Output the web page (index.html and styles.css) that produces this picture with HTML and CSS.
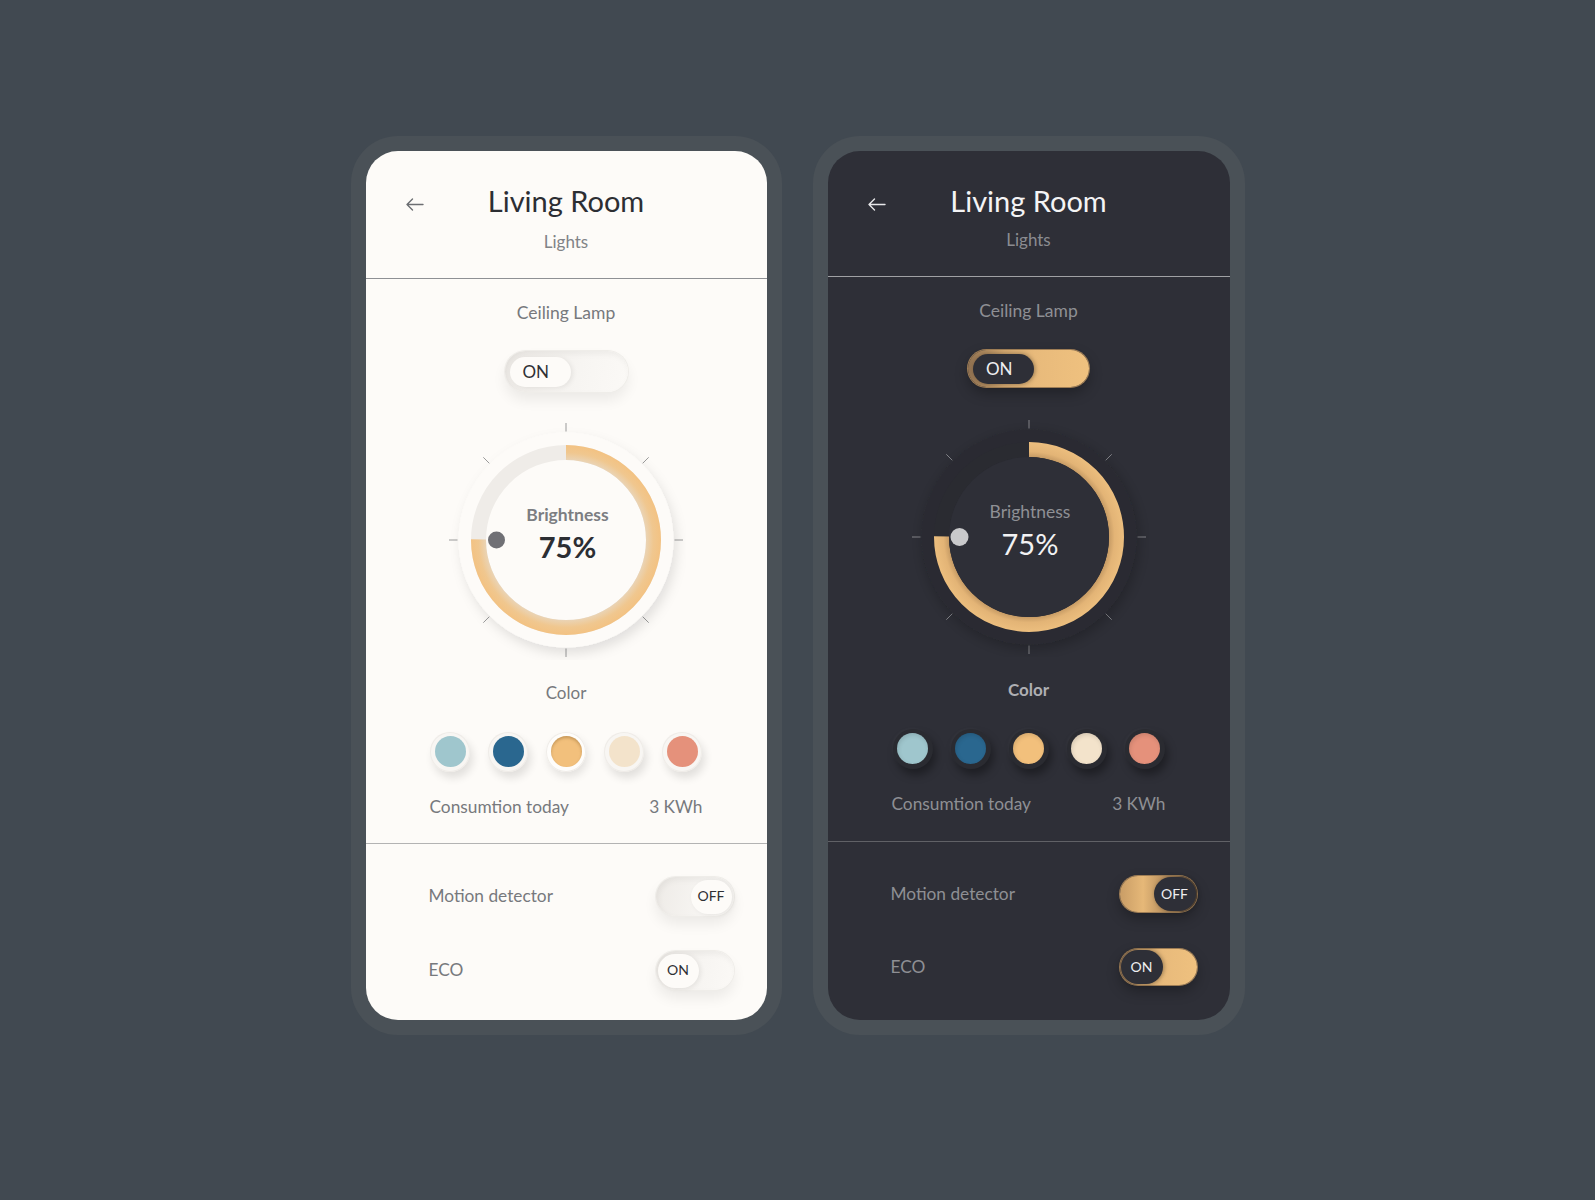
FILE: index.html
```html
<!DOCTYPE html>
<html>
<head>
  <meta charset="UTF-8">
  <title>Living Room Lights</title>
  <link rel="stylesheet" href="styles.css">
</head>
<body>
  <div class="screens">

    <!-- light theme -->
    <div class="device">
      <div class="card">
        <div class="card-header">
          <svg class="back" width="19" height="13" viewBox="0 0 19 13">
            <path d="M18 6.5H2 M7.5 1 L2 6.5 L7.5 12" />
          </svg>
          <div class="title-block">
            <h1>Living Room</h1>
            <p class="subtitle">Lights</p>
          </div>
        </div>

        <div class="lamp">
          <p class="label">Ceiling Lamp</p>
          <div class="toggle toggle-lg">
            <div class="toggle-knob">ON</div>
          </div>

          <div class="dial">
            <svg class="dial-svg" width="240" height="240" viewBox="0 0 240 240">
              <defs>
                <radialGradient id="ringLight" cx="120" cy="120" r="95" gradientUnits="userSpaceOnUse">
                  <stop offset="0.84" stop-color="#ead4b6"/>
                  <stop offset="0.92" stop-color="#f0c78f"/>
                  <stop offset="1" stop-color="#f3c282"/>
                </radialGradient>
                <filter id="faceLight" x="-20%" y="-20%" width="140%" height="140%">
                  <feDropShadow dx="3" dy="6" stdDeviation="6" flood-color="#000" flood-opacity="0.11"/>
                </filter>
              </defs>
              <g class="ticks">
                <line x1="120" y1="3" x2="120" y2="11.5"/>
                <line x1="120" y1="228.5" x2="120" y2="237"/>
                <line x1="3" y1="120" x2="11.5" y2="120"/>
                <line x1="228.5" y1="120" x2="237" y2="120"/>
                <line x1="37.3" y1="37.3" x2="43.3" y2="43.3"/>
                <line x1="202.7" y1="37.3" x2="196.7" y2="43.3"/>
                <line x1="37.3" y1="202.7" x2="43.3" y2="196.7"/>
                <line x1="202.7" y1="202.7" x2="196.7" y2="196.7"/>
              </g>
              <circle class="dial-face" cx="120" cy="120" r="107.5" filter="url(#faceLight)"/>
              <circle class="dial-track" cx="120" cy="120" r="87.5"/>
              <circle class="dial-arc" cx="120" cy="120" r="87.5" stroke="url(#ringLight)"
                      stroke-dasharray="412.3 549.8" transform="rotate(-90 120 120)"/>
              <circle class="dial-knob" cx="50.5" cy="120" r="8.5"/>
            </svg>
            <div class="dial-text">
              <span class="dial-caption">Brightness</span>
              <span class="dial-value">75%</span>
            </div>
          </div>

          <p class="label label-color">Color</p>
          <div class="swatches">
            <div class="swatch"><span class="swatch-sky"></span></div>
            <div class="swatch"><span class="swatch-navy"></span></div>
            <div class="swatch selected"><span class="swatch-amber"></span></div>
            <div class="swatch"><span class="swatch-cream"></span></div>
            <div class="swatch"><span class="swatch-coral"></span></div>
          </div>

          <div class="usage">
            <span>Consumtion today</span>
            <span>3 KWh</span>
          </div>
        </div>

        <div class="settings">
          <div class="setting">
            <span>Motion detector</span>
            <div class="toggle toggle-sm off">
              <div class="toggle-knob">OFF</div>
            </div>
          </div>
          <div class="setting">
            <span>ECO</span>
            <div class="toggle toggle-sm">
              <div class="toggle-knob">ON</div>
            </div>
          </div>
        </div>
      </div>
    </div>

    <!-- dark theme -->
    <div class="device">
      <div class="card dark">
        <div class="card-header">
          <svg class="back" width="19" height="13" viewBox="0 0 19 13">
            <path d="M18 6.5H2 M7.5 1 L2 6.5 L7.5 12" />
          </svg>
          <div class="title-block">
            <h1>Living Room</h1>
            <p class="subtitle">Lights</p>
          </div>
        </div>

        <div class="lamp">
          <p class="label">Ceiling Lamp</p>
          <div class="toggle toggle-lg">
            <div class="toggle-knob">ON</div>
          </div>

          <div class="dial">
            <svg class="dial-svg" width="240" height="240" viewBox="0 0 240 240">
              <defs>
                <radialGradient id="ringDark" cx="120" cy="120" r="95" gradientUnits="userSpaceOnUse">
                  <stop offset="0.84" stop-color="#c59a64"/>
                  <stop offset="0.9" stop-color="#e3b476"/>
                  <stop offset="1" stop-color="#ecbe7e"/>
                </radialGradient>
                <filter id="faceDark" x="-20%" y="-20%" width="140%" height="140%">
                  <feDropShadow dx="2" dy="4" stdDeviation="7" flood-color="#000" flood-opacity="0.25"/>
                </filter>
              </defs>
              <g class="ticks">
                <line x1="120" y1="3" x2="120" y2="11.5"/>
                <line x1="120" y1="228.5" x2="120" y2="237"/>
                <line x1="3" y1="120" x2="11.5" y2="120"/>
                <line x1="228.5" y1="120" x2="237" y2="120"/>
                <line x1="37.3" y1="37.3" x2="43.3" y2="43.3"/>
                <line x1="202.7" y1="37.3" x2="196.7" y2="43.3"/>
                <line x1="37.3" y1="202.7" x2="43.3" y2="196.7"/>
                <line x1="202.7" y1="202.7" x2="196.7" y2="196.7"/>
              </g>
              <circle class="dial-face" cx="120" cy="120" r="107.5" filter="url(#faceDark)"/>
              <circle class="dial-track" cx="120" cy="120" r="87.5"/>
              <circle class="dial-arc" cx="120" cy="120" r="87.5" stroke="url(#ringDark)"
                      stroke-dasharray="412.3 549.8" transform="rotate(-90 120 120)"/>
              <circle class="dial-core" cx="120" cy="120" r="80"/>
              <circle class="dial-knob" cx="50.5" cy="120" r="9"/>
            </svg>
            <div class="dial-text">
              <span class="dial-caption">Brightness</span>
              <span class="dial-value">75%</span>
            </div>
          </div>

          <p class="label label-color">Color</p>
          <div class="swatches">
            <div class="swatch"><span class="swatch-sky"></span></div>
            <div class="swatch"><span class="swatch-navy"></span></div>
            <div class="swatch"><span class="swatch-amber"></span></div>
            <div class="swatch"><span class="swatch-cream"></span></div>
            <div class="swatch"><span class="swatch-coral"></span></div>
          </div>

          <div class="usage">
            <span>Consumtion today</span>
            <span>3 KWh</span>
          </div>
        </div>

        <div class="settings">
          <div class="setting">
            <span>Motion detector</span>
            <div class="toggle toggle-sm off">
              <div class="toggle-knob">OFF</div>
            </div>
          </div>
          <div class="setting">
            <span>ECO</span>
            <div class="toggle toggle-sm">
              <div class="toggle-knob">ON</div>
            </div>
          </div>
        </div>
      </div>
    </div>

  </div>
</body>
</html>
```

FILE: styles.css
```css
body {
  margin: 0;
  background-color: #414951;
  font-family: "Lato", "Open Sans", sans-serif;
}
p, h1 {
  margin: 0;
}
.screens {
  display: flex;
  justify-content: center;
  gap: 31px;
  padding-top: 136px;
}
.device {
  display: flex;
  padding: 15px;
  background-color: #4a5157;
  border-radius: 47px;
}
.card {
  display: flex;
  flex-direction: column;
  width: 401px;
  border-radius: 32px;
  overflow: hidden;
  background-color: #fdfbf8;
  color: #77797d;
}

/* header */
.card-header {
  display: grid;
  grid-template-columns: 1fr auto 1fr;
  padding: 33px 0 26px;
  border-bottom: 1px solid #8e9094;
}
.back {
  grid-column: 1;
  grid-row: 1;
  justify-self: start;
  align-self: start;
  margin: 14px 0 0 39px;
}
.back path {
  fill: none;
  stroke: #6c6e72;
  stroke-width: 1.4;
  stroke-linecap: round;
  stroke-linejoin: round;
}
.title-block {
  grid-column: 2;
  grid-row: 1;
  text-align: center;
}
h1 {
  font-size: 29px;
  font-weight: 400;
  line-height: 1.2;
  color: #2c2e33;
}
.subtitle {
  margin-top: 13px;
  font-size: 17px;
  line-height: 1.2;
  color: #818387;
}

/* lamp section */
.lamp {
  display: flex;
  flex-direction: column;
  align-items: center;
  padding: 23px 0 26px;
  border-bottom: 1px solid #b3b3b3;
}
.label {
  font-size: 17.5px;
  line-height: 1.2;
}
.label-color {
  margin-top: 23px;
  font-size: 17px;
}

/* toggles */
.toggle {
  display: flex;
  align-items: center;
  box-sizing: border-box;
  border-radius: 999px;
  background: linear-gradient(100deg, #eeebe7 0%, #f7f5f2 60%, #fbf9f6 100%);
  box-shadow: 0 0 0 1px #efede9, 0 8px 14px rgba(0, 0, 0, 0.07), inset 2px 3px 6px rgba(0, 0, 0, 0.05);
}
.toggle-knob {
  display: flex;
  align-items: center;
  box-sizing: border-box;
  border-radius: 999px;
  background-color: #fdfbf8;
  color: #2f3034;
  box-shadow: 2px 1px 5px rgba(0, 0, 0, 0.07);
}
.toggle-lg {
  width: 123px;
  height: 41px;
  margin-top: 28px;
  padding: 0 5px;
}
.toggle-lg .toggle-knob {
  width: 61px;
  height: 30px;
  padding-left: 13px;
  font-size: 17px;
}
.toggle-sm {
  width: 78px;
  height: 39px;
  padding: 0 2px;
}
.toggle-sm.off {
  justify-content: flex-end;
}
.toggle-sm .toggle-knob {
  width: 41px;
  height: 34px;
  justify-content: center;
  font-size: 14px;
}

/* brightness dial */
.dial {
  display: grid;
  margin-top: 28px;
}
.dial-svg, .dial-text {
  grid-area: 1 / 1;
}
.ticks line {
  stroke: #9a9a9a;
  stroke-width: 1;
}
.dial-face {
  fill: #fdfbf8;
}
.dial-track {
  fill: none;
  stroke: #efece8;
  stroke-width: 15;
}
.dial-arc {
  fill: none;
  stroke-width: 15;
}
.dial-core {
  fill: #2e2f37;
}
.dial-knob {
  fill: #707075;
}
.dial-text {
  display: flex;
  flex-direction: column;
  align-items: center;
  align-self: start;
  margin-top: 84px;
  padding-left: 3px;
}
.dial-caption {
  font-size: 17.5px;
  font-weight: 700;
  line-height: 1.2;
  color: #7c7e82;
}
.dial-value {
  margin-top: 5px;
  font-size: 29px;
  font-weight: 700;
  line-height: 1.2;
  color: #2c2e33;
}

/* colour swatches */
.swatches {
  display: flex;
  gap: 18px;
  margin-top: 28px;
}
.swatch {
  width: 40px;
  height: 40px;
  display: flex;
  align-items: center;
  justify-content: center;
  border-radius: 50%;
  background-color: #f8f6f3;
  box-shadow: inset 0 0 0 1px #efece8, 3px 6px 9px rgba(0, 0, 0, 0.11);
}
.swatch span {
  width: 31px;
  height: 31px;
  border-radius: 50%;
}
.swatch.selected {
  background-color: #fefdfb;
  box-shadow: inset 0 0 0 1px #f0ede9, 2px 5px 8px rgba(0, 0, 0, 0.1);
}
.swatch.selected span {
  box-shadow: inset 0 2px 3px rgba(120, 80, 30, 0.35);
}
.swatch-sky { background-color: #9fc6cd; }
.swatch-navy { background-color: #2a678f; }
.swatch-amber { background-color: #f2c07c; }
.swatch-cream { background-color: #f3e3cb; }
.swatch-coral { background-color: #e5917b; }

.usage {
  display: flex;
  justify-content: space-between;
  align-self: stretch;
  margin-top: 25px;
  padding: 0 64px;
  font-size: 17.3px;
  line-height: 1.2;
}

/* settings rows */
.settings {
  display: flex;
  flex-direction: column;
  gap: 35px;
  padding: 33px 33px 30px 63px;
}
.setting {
  display: flex;
  justify-content: space-between;
  align-items: center;
  font-size: 17.3px;
  line-height: 1.2;
}

/* dark theme */
.card.dark {
  width: 402px;
  background-color: #2e2f37;
  color: #8e8f94;
}
.dark .card-header {
  border-bottom-color: #a0a1a4;
}
.dark .back path {
  stroke: #e8e8ea;
}
.dark h1 {
  color: #f4f4f5;
}
.dark .subtitle {
  margin-top: 11px;
  color: #8b8c91;
}
.dark .lamp {
  padding-bottom: 27px;
  border-bottom-color: #606166;
}
.dark .label-color {
  margin-top: 23px;
  font-weight: 700;
  color: #aeafb3;
}
.dark .toggle {
  box-shadow: 0 0 0 1px #9e7d55, 0 6px 14px rgba(0, 0, 0, 0.3);
  background: linear-gradient(90deg, #8f7050 0%, #d2a76f 30%, #e8ba7b 55%, #efc17f 100%);
}
.dark .toggle-lg {
  width: 121px;
  height: 37px;
  margin: 29px 0 2px;
}
.dark .toggle-sm.off {
  background: linear-gradient(90deg, #c99d66 0%, #e6b878 30%, #b48c5c 60%, #5c4a38 100%);
}
.dark .toggle-sm {
  width: 77px;
  height: 36px;
  padding: 0 1px;
}
.dark .settings {
  gap: 37px;
  padding-top: 34px;
}
.dark .toggle-knob {
  background-color: #2e2f37;
  color: #eeeef0;
  box-shadow: 1px 0 4px rgba(0, 0, 0, 0.35);
}
.dark .toggle-sm .toggle-knob {
  width: 42px;
  height: 34px;
}
.dark .ticks line {
  stroke: #85868b;
}
.dark .dial-face {
  fill: #2a2b32;
}
.dark .dial-track {
  stroke: #2a2b31;
}
.dark .dial-knob {
  fill: #c9c9cb;
}
.dark .dial-caption {
  font-weight: 400;
  color: #8f9095;
}
.dark .dial-value {
  font-weight: 400;
  color: #f2f2f3;
}
.dark .swatch {
  background-color: #2a2b31;
  box-shadow: 3px 6px 9px rgba(0, 0, 0, 0.35), -1px -1px 3px rgba(255, 255, 255, 0.03);
}
.dark .swatch span {
  box-shadow: inset 1px 2px 4px rgba(0, 0, 0, 0.12);
}
```
